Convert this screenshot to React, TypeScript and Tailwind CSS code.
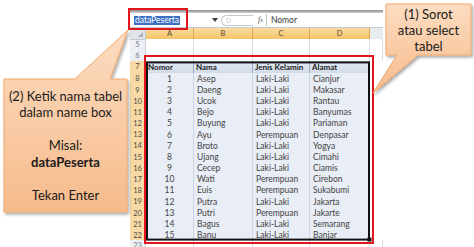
import React from 'react';

const rows = [
  ['1', 'Asep', 'Laki-Laki', 'Cianjur'],
  ['2', 'Daeng', 'Laki-Laki', 'Makasar'],
  ['3', 'Ucok', 'Laki-Laki', 'Rantau'],
  ['4', 'Bejo', 'Laki-Laki', 'Banyumas'],
  ['5', 'Buyung', 'Laki-Laki', 'Pariaman'],
  ['6', 'Ayu', 'Perempuan', 'Denpasar'],
  ['7', 'Broto', 'Laki-Laki', 'Yogya'],
  ['8', 'Ujang', 'Laki-Laki', 'Cimahi'],
  ['9', 'Cecep', 'Laki-Laki', 'Ciamis'],
  ['10', 'Wati', 'Perempuan', 'Cirebon'],
  ['11', 'Euis', 'Perempuan', 'Sukabumi'],
  ['12', 'Putra', 'Laki-Laki', 'Jakarta'],
  ['13', 'Putri', 'Perempuan', 'Jakarte'],
  ['14', 'Bagus', 'Laki-Laki', 'Semarang'],
  ['15', 'Banu', 'Laki-Laki', 'Banjar'],
];

const font = { fontFamily: 'Lato, "Open Sans", sans-serif' };
const cols = 'grid grid-cols-[16px_48px_59px_57px_60px_13px] h-[11.2px]';

function RowHead({ n, selected }: { n: number; selected?: boolean }) {
  return (
    <div
      className={
        selected
          ? 'flex items-center justify-center border-b border-r border-[#e2b56c] bg-[#f8dba4] text-[7.5px] text-[#4a4a4a]'
          : 'flex items-center justify-center border-b border-r border-[#c9d0d9] bg-[#eceff3] text-[7.5px] text-[#6f7b8a]'
      }
    >
      {n}
    </div>
  );
}

function EmptyRow({ n }: { n: number }) {
  return (
    <div className={cols}>
      <RowHead n={n} />
      <div className="border-b border-r border-[#dadcdf] bg-white" />
      <div className="border-b border-r border-[#dadcdf] bg-white" />
      <div className="border-b border-r border-[#dadcdf] bg-white" />
      <div className="border-b border-r border-[#dadcdf] bg-white" />
      <div className="border-b border-r border-[#dadcdf] bg-white" />
    </div>
  );
}

function Sheet() {
  return (
    <div className="flex flex-col w-[253px] pt-[10px]">
      <div className="h-[3px] bg-gradient-to-b from-[#8c8c8c] to-[#d2d2d2]" />
      <div className="h-[15px] flex items-center bg-white border-b border-[#c3cad3]">
        <div className="w-[82px] h-full flex items-center pl-[4px]">
          <span className="bg-[#3d6fc2] text-white text-[8.5px] leading-[9px] px-[1px]">dataPeserta</span>
        </div>
        <svg width="6" height="4" viewBox="0 0 6 4">
          <path d="M0 0 L6 0 L3 4 Z" fill="#3b3b3b" />
        </svg>
        <div className="ml-[3px] w-[32px] h-[11px] rounded-l-full border-l border-y border-[#c4c9d0] flex items-center pl-[4px]">
          <div className="w-[5px] h-[5px] rounded-full border border-[#cfd3d8]" />
        </div>
        <span className="ml-[5px] text-[8px] italic text-[#555]" style={{ fontFamily: '"Liberation Serif", serif' }}>
          f<span className="text-[6px]">x</span>
        </span>
        <div className="ml-[3px] w-px h-[12px] bg-[#c4c9d0]" />
        <span className="ml-[4px] text-[8.5px] text-[#3a3a3a]">Nomor</span>
      </div>
      <div className={`${cols} h-[11px]`}>
        <div className="relative border-r border-b border-[#c3c9d1] bg-[#e1e5ea]">
          <svg width="5" height="5" viewBox="0 0 5 5" className="absolute right-[2px] bottom-[2px]">
            <path d="M5 0 L5 5 L0 5 Z" fill="#a9b1bb" />
          </svg>
        </div>
        {['A', 'B', 'C', 'D'].map((c) => (
          <div
            key={c}
            className="flex items-center justify-center border-r border-b border-[#dba84e] bg-gradient-to-b from-[#fadb9f] to-[#f4c467] text-[7.5px] text-[#5a4a30]"
          >
            {c}
          </div>
        ))}
        <div className="border-b border-[#c3c9d1] bg-[#e8ecf1]" />
      </div>
      <EmptyRow n={5} />
      <EmptyRow n={6} />
      <div className={cols}>
        <RowHead n={7} selected />
        {['Nomor', 'Nama', 'Jenis Kelamin', 'Alamat'].map((h) => (
          <div
            key={h}
            className="flex items-center pl-[2px] border-b border-r border-[#9eadc2] bg-gradient-to-b from-[#e2e9f2] to-[#d2dce9] text-[8px] font-bold text-[#1c1c1c] whitespace-nowrap overflow-hidden"
          >
            {h}
          </div>
        ))}
        <div className="border-b border-[#dadcdf] bg-white" />
      </div>
      {rows.map((r, i) => (
        <div key={r[0]} className={cols}>
          <RowHead n={i + 8} selected />
          <div className="flex items-center justify-center border-b border-r border-[#cdd6e3] bg-[#e8edf6] text-[8.5px] text-[#444]">
            {r[0]}
          </div>
          {r.slice(1).map((v, j) => (
            <div
              key={j}
              className="flex items-center pl-[3px] border-b border-r border-[#cdd6e3] bg-[#e8edf6] text-[8.5px] text-[#444] whitespace-nowrap overflow-hidden"
            >
              {v}
            </div>
          ))}
          <div className="border-b border-[#dadcdf] bg-white" />
        </div>
      ))}
      <EmptyRow n={23} />
    </div>
  );
}

export default function App() {
  return (
    <div className="relative w-[474px] h-[247px] overflow-hidden bg-white" style={font}>
      <div className="flex">
        <div className="w-[130px] shrink-0" />
        <Sheet />
      </div>

      <svg className="absolute inset-0 pointer-events-none" width="474" height="247" viewBox="0 0 474 247">
        <defs>
          <linearGradient id="peach" x1="0" y1="0" x2="0" y2="1">
            <stop offset="0" stopColor="#fcdcc0" />
            <stop offset="1" stopColor="#f6bb8c" />
          </linearGradient>
          <filter id="shadow" x="-10%" y="-10%" width="130%" height="130%">
            <feDropShadow dx="1.5" dy="2" stdDeviation="1.5" floodColor="#000" floodOpacity="0.35" />
          </filter>
        </defs>
        <rect x="147" y="62.4" width="222" height="177.2" fill="none" stroke="#111" strokeWidth="2" />
        <rect x="367.5" y="237.5" width="4" height="4" fill="#111" />
        <rect x="145" y="56" width="228" height="187" fill="none" stroke="#e3151d" strokeWidth="2" />
        <rect x="129" y="9" width="58" height="20" fill="none" stroke="#e3151d" strokeWidth="2" />
        <path
          d="M4 79 L75 79 L128 30 L110 79 L127 79 L127 212 L4 212 Z"
          fill="url(#peach)"
          stroke="#f2a86c"
          strokeWidth="1"
          filter="url(#shadow)"
        />
        <path
          d="M386 4 L471 4 L471 55 L418 55 L373 93 L397 55 L386 55 Z"
          fill="url(#peach)"
          stroke="#f2a86c"
          strokeWidth="1"
          filter="url(#shadow)"
        />
      </svg>

      <div className="absolute left-[4px] top-[79px] w-[123px] h-[133px] flex flex-col items-center justify-center text-center text-[13px] leading-[16.5px] text-[#1a1a1a]">
        <div>(2) Ketik nama tabel</div>
        <div>dalam name box</div>
        <div className="h-[16.5px]" />
        <div>Misal:</div>
        <div className="font-bold">dataPeserta</div>
        <div className="h-[16.5px]" />
        <div>Tekan Enter</div>
      </div>

      <div className="absolute left-[386px] top-[4px] w-[85px] h-[51px] flex flex-col items-center justify-center text-center text-[13px] leading-[16px] text-[#1a1a1a]">
        <div>(1) Sorot</div>
        <div>atau select</div>
        <div>tabel</div>
      </div>
    </div>
  );
}
